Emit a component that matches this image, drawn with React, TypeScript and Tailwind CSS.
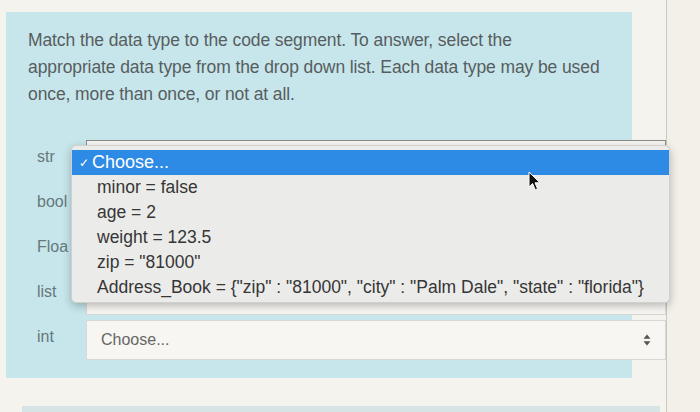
import React from "react";

const items = [
  "minor = false",
  "age = 2",
  "weight = 123.5",
  'zip = "81000"',
  'Address_Book = {"zip" : "81000", "city" : "Palm Dale", "state" : "florida"}',
];

const labels = ["str", "bool", "Floa", "list", "int"];

export default function App() {
  return (
    <div className="relative w-[700px] h-[412px] overflow-hidden bg-[#f3efe9] font-['Liberation_Sans',Arial,sans-serif]">
      <div className="w-[667px] h-full border-r border-[#c8c8c4] bg-[#f5f3ee] pt-[12px] pl-[6px] flex flex-col">
        <div className="shrink-0 w-[626px] h-[366px] bg-[#c6e6ec] pl-[22px] pt-[15px] flex flex-col">
          <p className="text-[17.5px] leading-[27px] text-[#585d5e] whitespace-nowrap tracking-[-0.1px]">
            Match the data type to the code segment. To answer, select the
            <br />
            appropriate data type from the drop down list. Each data type may be used
            <br />
            once, more than once, or not at all.
          </p>
          <div className="mt-[32px] flex flex-col gap-[5px]">
            {labels.map((l, i) => (
              <div key={l} className="flex items-start">
                <div className="shrink-0 w-[58px] pl-[9px] pt-[5px] text-[16px] text-[#66787a]">{l}</div>
                <div
                  className={
                    i === 0
                      ? "shrink-0 w-[580px] h-[40px] bg-[#f7f6f2] border border-[#8a8a88]"
                      : "shrink-0 w-[580px] h-[40px] bg-[#f7f6f2] border border-[#d7d7d3] flex items-center justify-between pl-[14px] pr-[14px]"
                  }
                >
                  {i === 4 && (
                    <>
                      <span className="text-[16px] text-[#666]">Choose...</span>
                      <svg width="8" height="12" viewBox="0 0 8 12">
                        <path d="M4 0.5 L7.5 4.8 L0.5 4.8 Z" fill="#555" />
                        <path d="M4 11.5 L7.5 7.2 L0.5 7.2 Z" fill="#555" />
                      </svg>
                    </>
                  )}
                </div>
              </div>
            ))}
          </div>
        </div>
        <div className="shrink-0 mt-[28px] mr-[6px] ml-[16px] h-[20px] bg-[#d6e4e6]" />
      </div>

      {/* dropdown popup */}
      <div className="absolute left-[71px] top-[145px] w-[599px] h-[158px] bg-[#ebebe9] rounded-[5px] shadow-[0_3px_8px_rgba(0,0,0,0.25)] border border-[#d0d0ce] pt-[4px]">
        <div className="relative h-[25px] bg-[#2d8be6] flex items-center pl-[20px] text-[18px] text-white">
          <span className="absolute left-[7px] text-[12px]">✓</span>
          Choose...
        </div>
        {items.map((t) => (
          <div key={t} className="h-[25px] flex items-center pl-[25px] text-[17.5px] text-[#363636] whitespace-nowrap">
            {t}
          </div>
        ))}
      </div>

      {/* cursor */}
      <svg className="absolute left-[528px] top-[171px]" width="14" height="21" viewBox="0 0 14 21">
        <path d="M1 1 L1 16 L4.6 12.6 L7.2 18.8 L9.6 17.8 L7 11.8 L12 11.8 Z" fill="#111" stroke="#fff" strokeWidth="1" />
      </svg>
    </div>
  );
}
